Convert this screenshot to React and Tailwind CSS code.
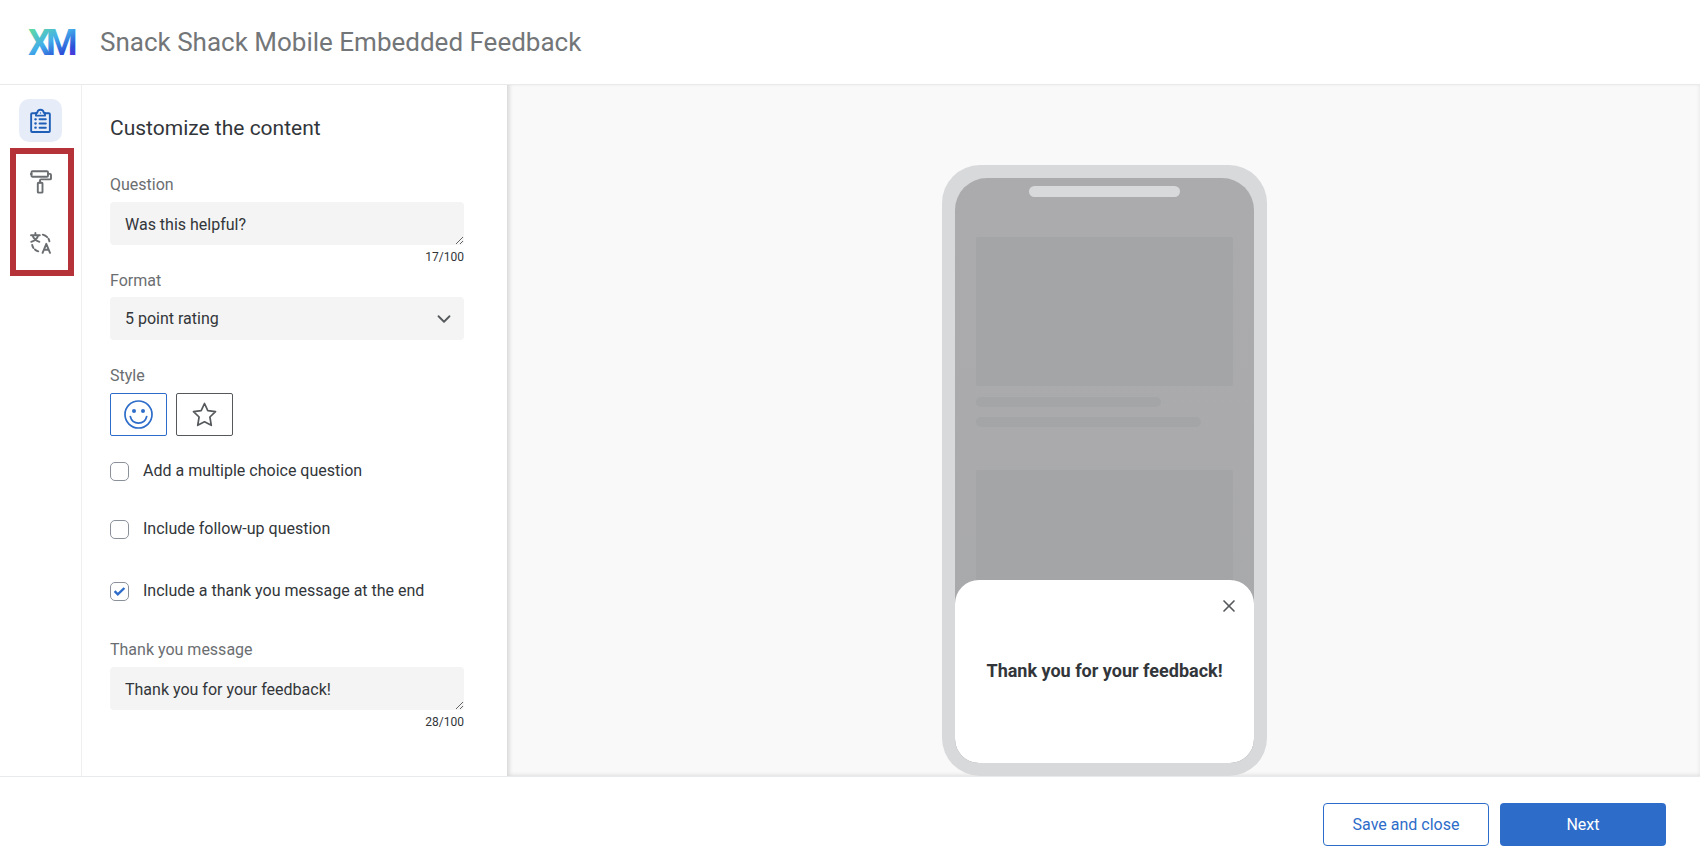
import React, { useState } from 'react';
import { ChevronDown, X } from 'lucide-react';

const MAX_CHARS = 100;

function Logo() {
  return (
    <svg width="50" height="44" viewBox="0 0 50 44" role="img" aria-label="XM">
      <defs>
        <linearGradient id="xm" gradientUnits="userSpaceOnUse" x1="0" y1="8" x2="25" y2="51">
          <stop offset="0" stopColor="#62e09a" />
          <stop offset="0.45" stopColor="#43aeea" />
          <stop offset="0.78" stopColor="#2b50d8" />
          <stop offset="1" stopColor="#5a2be0" />
        </linearGradient>
      </defs>
      <g fill="url(#xm)" className="font-[Roboto,sans-serif] text-[36px] font-bold">
        <text x="0" y="35">X</text>
        <text x="18" y="35">M</text>
      </g>
    </svg>
  );
}

function ClipboardIcon() {
  return (
    <svg width="21" height="26" viewBox="0 0 22 26" fill="none" stroke="currentColor" strokeWidth="2" strokeLinejoin="round" strokeLinecap="round">
      <path d="M6.3 4.800H2.200a1 1 0 0 0-1 1v17.800a1 1 0 0 0 1 1h17.600a1 1 0 0 0 1-1V5.800a1 1 0 0 0-1-1h-4.100" />
      <path d="M6.300 7.400V4.600h1.200C7.800 2.600 9.100 1.200 11 1.200s3.200 1.400 3.500 3.400h1.200v2.800z" />
      <path d="M10 11.200h6.600M10 15.600h6.600M10 20h6.600" />
      <path d="M5.600 11.200h.4M5.600 15.600h.4M5.600 20h.4" strokeWidth="2.400" />
      <circle cx="11" cy="4.600" r=".7" fill="currentColor" stroke="none" />
    </svg>
  );
}

function PaintRollerIcon() {
  return (
    <svg width="22" height="24" viewBox="0 0 22 24" fill="none" stroke="currentColor" strokeWidth="1.900" strokeLinejoin="round" strokeLinecap="round">
      <rect x="1.500" y="1.300" width="16.500" height="5.400" rx="1" />
      <path d="M18 3.900h2a1 1 0 0 1 1 1v3.500a1 1 0 0 1-1 1h-9a1 1 0 0 0-1 1v2.400" />
      <rect x="7.800" y="12.800" width="4.700" height="9.800" rx=".6" />
      <path d="M.9 4h.6" />
    </svg>
  );
}

function TranslateIcon() {
  return (
    <svg width="22" height="22" viewBox="0 0 22 22" fill="none" stroke="currentColor" strokeWidth="1.900" strokeLinecap="round" strokeLinejoin="round">
      <path d="M1 3.200h8.800M5.400 1v2.200M2.600 3.200c.7 3 3.200 5.400 6.800 6.600M8.200 3.200C7.500 6.200 5 8.600 1.200 9.800" />
      <path d="M12.600 20.800l3.700-9 3.700 9M13.900 17.800h4.800" />
      <path d="M12.800 2.600c1.800.5 3.300 1.400 4.400 2.500M18.500 6.700c.5.9.8 1.700.9 2.600" />
      <path d="M2.200 13c.2 1.200.6 2.100 1.200 3M4.900 17.500c1 .9 2 1.400 3.400 1.800" />
    </svg>
  );
}

function SmileIcon() {
  return (
    <svg width="29" height="29" viewBox="0 0 29 29" fill="none" stroke="currentColor" strokeWidth="1.700" strokeLinecap="round">
      <circle cx="14.500" cy="14.500" r="13.500" />
      <path d="M6.300 16.500c1 4 4.300 6.600 8.200 6.600s7.200-2.600 8.200-6.600" />
      <circle cx="10" cy="11" r="2" fill="currentColor" stroke="none" />
      <circle cx="19" cy="11" r="2" fill="currentColor" stroke="none" />
    </svg>
  );
}

function StarIcon() {
  return (
    <svg width="25" height="25" viewBox="0 0 25 25" fill="none" stroke="currentColor" strokeWidth="1.700" strokeLinejoin="round">
      <path d="M12.500 1.500l3.300 7.100 7.700 1-5.600 5.400 1.400 8.300-6.800-3.500-6.800 3.500 1.400-8.300L1.500 9.600l7.700-1z" />
    </svg>
  );
}

function CharacterField({ id, label, value, count, onChange }) {
  return (
    <div className="flex flex-col">
      <label htmlFor={id} className="text-base leading-6 text-[#6b6e71]">{label}</label>
      <textarea
        id={id}
        rows={1}
        maxLength={MAX_CHARS}
        value={value}
        onChange={(e) => onChange(e.target.value)}
        className="mt-[5px] block h-[43px] w-full resize-y overflow-hidden rounded bg-[#f4f4f4] px-[15px] pt-[11px] pb-2 text-base leading-6 text-[#32363a] outline-none"
      />
      <div className="mt-1 text-right text-xs leading-4 text-[#32363a]">{count}/{MAX_CHARS}</div>
    </div>
  );
}

function Checkbox({ label, checked, onChange }) {
  return (
    <label className="flex items-center gap-[14px] text-base leading-6 text-[#32363a]">
      <span className="relative flex size-[19px]">
        <input
          type="checkbox"
          checked={checked}
          onChange={(e) => onChange(e.target.checked)}
          className="size-[19px] appearance-none rounded-[5px] border border-[#8b919b] bg-white"
        />
        {checked && (
          <svg className="pointer-events-none absolute inset-0 text-[#2d6dc9]" width="19" height="19" viewBox="0 0 19 19" fill="none" stroke="currentColor" strokeWidth="2.400">
            <path d="M4.600 9.200l3.200 3.200L14.400 6" />
          </svg>
        )}
      </span>
      {label}
    </label>
  );
}

function PhonePreview({ message }) {
  return (
    <div className="flex w-[325px] flex-1 rounded-[38px] bg-[#d8d9db] p-[13px]">
      <div className="flex w-full flex-col overflow-hidden rounded-t-[32px] rounded-b-[24px] bg-gradient-to-b from-[#ababad] to-[#a8a9ab]">
        <div className="flex flex-1 flex-col px-[21px] pt-2">
          <div className="h-[11px] w-[151px] self-center rounded-full bg-[#d8d9db]" />
          <div className="mt-10 h-[149px] rounded-xs bg-[#a4a5a7]" />
          <div className="mt-[11px] h-[10px] w-[185px] rounded-full bg-[#a4a5a7]" />
          <div className="mt-[10px] h-[10px] w-[225px] rounded-full bg-[#a4a5a7]" />
          <div className="mt-[43px] flex-1 rounded-t-xs bg-[#a4a5a7]" />
        </div>
        <div className="relative flex h-[183px] items-center justify-center rounded-[24px] bg-white pb-[2px]">
          <button aria-label="Close" className="absolute top-4 right-[15px] text-[#56595c]">
            <X size={20} strokeWidth={2} />
          </button>
          <p className="text-lg leading-6 font-bold text-[#32363a]">{message}</p>
        </div>
      </div>
    </div>
  );
}

export default function App() {
  const [question, setQuestion] = useState('Was this helpful?');
  const [format, setFormat] = useState('5 point rating');
  const [style, setStyle] = useState('smile');
  const [multipleChoice, setMultipleChoice] = useState(false);
  const [followUp, setFollowUp] = useState(false);
  const [thankYou, setThankYou] = useState(true);
  const [message, setMessage] = useState('Thank you for your feedback!');

  return (
    <div className="flex min-h-screen flex-col bg-white font-[Roboto,sans-serif]">
      {/* Header */}
      <header className="flex h-[85px] items-center border-b border-[#e9eaeb] pl-[28px]">
        <Logo />
        <h1 className="ml-[22px] text-[26px] leading-8 text-[#737678]">Snack Shack Mobile Embedded Feedback</h1>
      </header>

      <div className="flex flex-1">
        {/* Sidebar */}
        <nav className="w-[82px] border-r border-[#efefef] pt-[14px] pl-[10px]">
          <button aria-label="Content" className="ml-[9px] flex size-[43px] items-center justify-center rounded-[10px] bg-[#e6edf8] text-[#1f5fb8]">
            <ClipboardIcon />
          </button>
          <div className="mt-[6px] flex h-32 w-16 flex-col justify-center gap-[18px] border-6 border-[#b53338] pl-[3px]">
            <button aria-label="Appearance" className="flex size-[43px] items-center justify-center text-[#6b6e71]">
              <PaintRollerIcon />
            </button>
            <button aria-label="Translations" className="flex size-[43px] items-center justify-center text-[#6b6e71]">
              <TranslateIcon />
            </button>
          </div>
        </nav>

        {/* Content form */}
        <main className="flex w-[425px] flex-col pt-[29px] pr-[43px] pl-[28px]">
          <h2 className="text-[21px] leading-7 text-[#32363a]">Customize the content</h2>

          <div className="mt-[31px]">
            <CharacterField id="question" label="Question" value={question} count={question.length} onChange={setQuestion} />
          </div>

          <label htmlFor="format" className="mt-1 text-base leading-6 text-[#6b6e71]">Format</label>
          <div className="relative mt-1">
            <select
              id="format"
              value={format}
              onChange={(e) => setFormat(e.target.value)}
              className="h-[43px] w-full appearance-none rounded bg-[#f4f4f4] px-[15px] text-base text-[#32363a]"
            >
              <option>5 point rating</option>
              <option>Thumbs</option>
            </select>
            <ChevronDown size={22} strokeWidth={2} className="pointer-events-none absolute top-[11px] right-[9px] text-[#56595c]" />
          </div>

          <div className="mt-6 text-base leading-6 text-[#6b6e71]">Style</div>
          <div className="mt-[5px] flex gap-[9px]">
            <button
              aria-label="Smiley"
              onClick={() => setStyle('smile')}
              className={`flex h-[43px] w-[57px] items-center justify-center rounded-xs border ${style === 'smile' ? 'border-[#2d6dc9] text-[#2d6dc9]' : 'border-[#56595c] text-[#56595c]'}`}
            >
              <SmileIcon />
            </button>
            <button
              aria-label="Star"
              onClick={() => setStyle('star')}
              className={`flex h-[43px] w-[57px] items-center justify-center rounded-xs border ${style === 'star' ? 'border-[#2d6dc9] text-[#2d6dc9]' : 'border-[#56595c] text-[#56595c]'}`}
            >
              <StarIcon />
            </button>
          </div>

          <div className="mt-[23px] flex flex-col">
            <Checkbox label="Add a multiple choice question" checked={multipleChoice} onChange={setMultipleChoice} />
            <div className="mt-[34px]">
              <Checkbox label="Include follow-up question" checked={followUp} onChange={setFollowUp} />
            </div>
            <div className="mt-[38px]">
              <Checkbox label="Include a thank you message at the end" checked={thankYou} onChange={setThankYou} />
            </div>
          </div>

          <div className="mt-[35px]">
            <CharacterField id="thanks" label="Thank you message" value={message} count={28} onChange={setMessage} />
          </div>
        </main>

        {/* Preview */}
        <section className="flex flex-1 flex-col items-center bg-[#f9f9f9] pt-20 pl-[2px] shadow-[inset_4px_0_4px_-2px_#d4d4d4,inset_-3px_0_4px_-3px_#e4e4e4,inset_0_-4px_4px_-3px_#e4e4e4]">
          <PhonePreview message={message} />
        </section>
      </div>

      {/* Footer */}
      <footer className="flex h-[74px] items-center justify-end gap-[11px] border-t border-[#e9eaeb] pt-[22px] pr-[34px]">
        <button className="h-[43px] w-[166px] rounded border border-[#2d6dc9] text-base text-[#2d6dc9]">Save and close</button>
        <button className="h-[43px] w-[166px] rounded bg-[#2d6dc9] text-base text-white">Next</button>
      </footer>
    </div>
  );
}
